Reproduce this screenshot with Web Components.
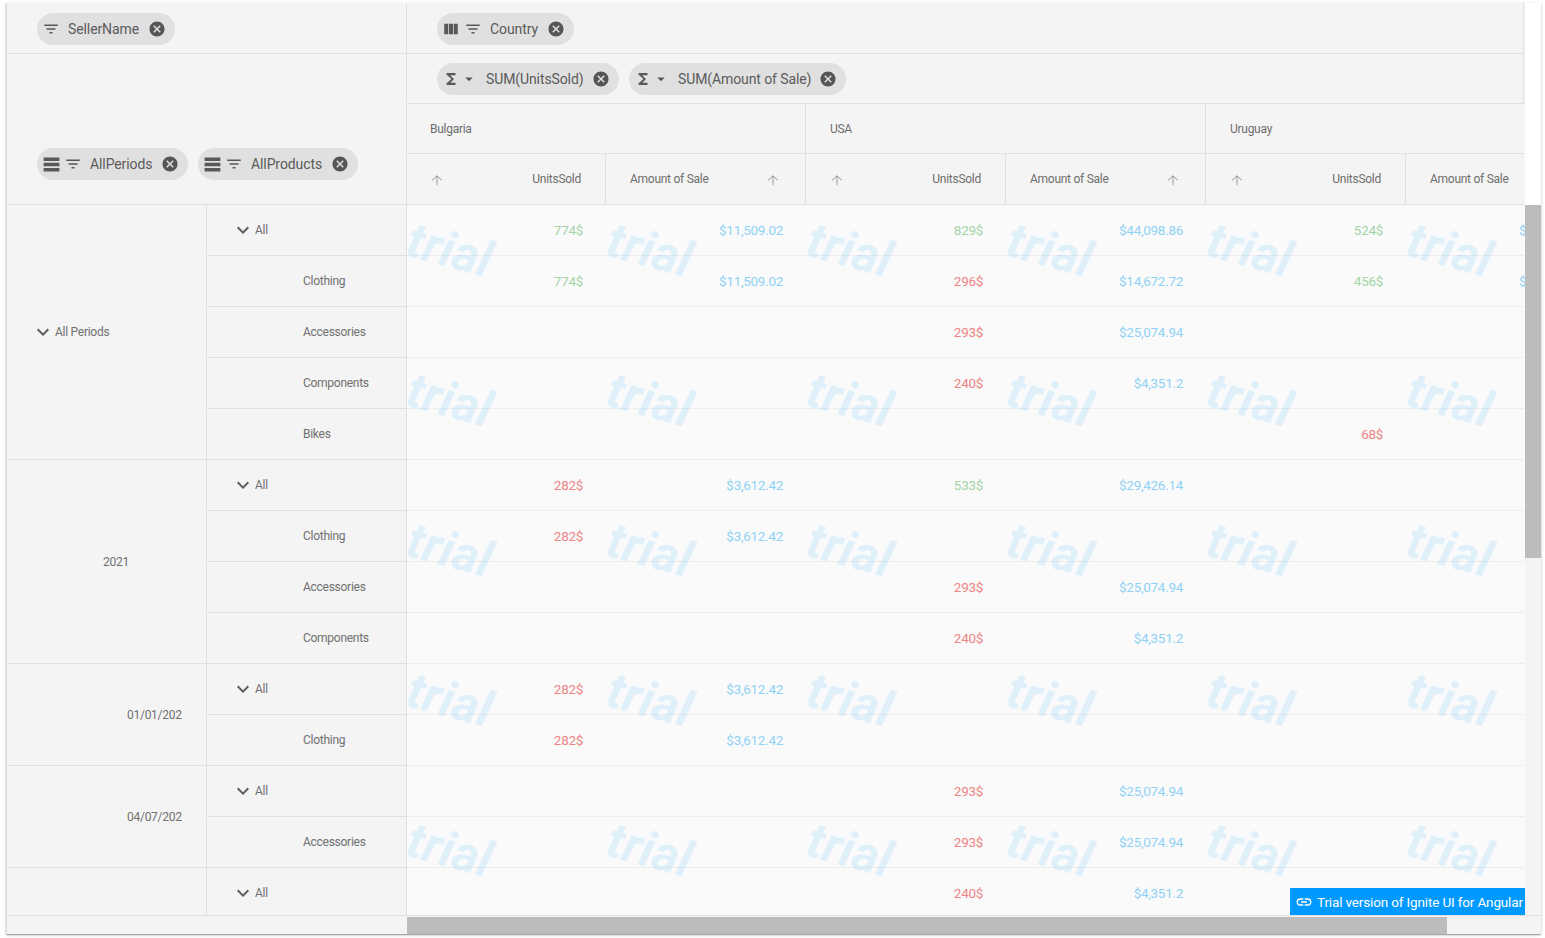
<!DOCTYPE html>
<html lang="en"><head><meta charset="utf-8"><title>Pivot grid</title>
<style>
html,body{margin:0;padding:0;background:#fff}
body{font-family:Roboto,"Liberation Sans",sans-serif;width:1545px;height:938px;overflow:hidden;padding:3px 0 0 6px;box-sizing:border-box}
</style></head><body>
<pivot-grid></pivot-grid>
<script>
const PATHS={
filter_list:'M10 18h4v-2h-4v2zM3 6v2h18V6H3zm3 7h12v-2H6v2z',
table_rows:'M21 8H3V4h18v4zm0 2H3v4h18v-4zm0 6H3v4h18v-4z',
view_column:'M14.67 5v14H9.33V5h5.34zm1 14H21V5h-5.33v14zm-7.34 0V5H3v14h5.33z',
functions:'M18 4H6v2l6.5 6L6 18v2h12v-3h-7l5-5-5-5h7z',
arrow_drop_down:'M7 10l5 5 5-5z',
cancel:'M12 2C6.47 2 2 6.47 2 12s4.47 10 10 10 10-4.47 10-10S17.53 2 12 2zm5 13.59L15.59 17 12 13.41 8.41 17 7 15.59 10.59 12 7 8.41 8.41 7 12 10.59 15.59 7 17 8.41 13.41 12 17 15.59z',
arrow_upward:'M4.7 12l.8.8L11.4 6.9V20h1.2V6.9l5.9 5.9.8-.8L12 4.7z',
expand_more:'M16.59 8.59L12 13.17 7.41 8.59 6 10l6 6 6-6z',
link:'M3.9 12c0-1.71 1.39-3.1 3.1-3.1h4V7H7c-2.76 0-5 2.24-5 5s2.24 5 5 5h4v-1.9H7c-1.71 0-3.1-1.39-3.1-3.1zM8 13h8v-2H8v2zm9-6h-4v1.9h4c1.71 0 3.1 1.39 3.1 3.1s-1.39 3.1-3.1 3.1h-4V17h4c2.76 0 5-2.24 5-5s-2.24-5-5-5z'
};
class GridIcon extends HTMLElement{
  connectedCallback(){
    if(this.shadowRoot)return;
    const s=this.getAttribute('size')||18,b=this.getAttribute('box')||s,m=(b-s)/2;
    this.attachShadow({mode:'open'}).innerHTML=`<style>:host{display:block;flex:none;width:${b}px;height:${b}px}svg{display:block;width:${s}px;height:${s}px;margin:${m}px;fill:currentColor}</style><svg viewBox="0 0 24 24" aria-hidden="true"><path d="${PATHS[this.getAttribute('name')]}"/></svg>`;
  }
}
customElements.define('grid-icon',GridIcon);

class PivotChip extends HTMLElement{
  connectedCallback(){
    if(this.shadowRoot)return;
    const icons=(this.getAttribute('icons')||'').split(',');
    const w=this.getAttribute('w'),pad=this.getAttribute('pad')||5,gap=this.getAttribute('gap')||4;
    const ic=icons.map(n=>n==='table_rows'?`<grid-icon name="${n}" size="21" box="18"></grid-icon>`:`<grid-icon name="${n}"></grid-icon>`).join('');
    this.attachShadow({mode:'open'}).innerHTML=`<style>
      :host{display:inline-flex;align-items:center;height:32px;border-radius:16px;background:#e0e0e0;color:#5b5b5b;padding:0 9px 0 ${pad}px;box-sizing:border-box;flex:none}
      .ic{display:flex;gap:${gap}px;color:#585858}
      .t{width:${w}px;margin:0 8px;white-space:nowrap;font-size:14px;letter-spacing:-.1px;line-height:18px}
      grid-icon.x{color:#555}
    </style><div class="ic">${ic}</div><span class="t"><slot></slot></span><grid-icon class="x" name="cancel"></grid-icon>`;
  }
}
customElements.define('pivot-chip',PivotChip);

class ColHeader extends HTMLElement{
  connectedCallback(){
    if(this.shadowRoot)return;
    const side=this.getAttribute('arrow');
    const arrow=side?`<grid-icon name="arrow_upward" size="16"></grid-icon>`:'';
    this.attachShadow({mode:'open'}).innerHTML=`<style>
      :host{display:flex;align-items:center;justify-content:space-between;box-sizing:border-box;width:200px;flex:none;height:100%;padding:0 24px;border-left:1px solid #e0e0e0;font-size:12px;letter-spacing:-.27px;color:#6e6e6e;background:#f4f4f4}
      :host([arrow=right]){flex-direction:row-reverse}
      :host([arrow=left]) grid-icon{margin-left:-1px}
      grid-icon{color:#8a8a8a;margin-top:2px}
    </style>${arrow}<span><slot></slot></span>`;
  }
}
customElements.define('col-header',ColHeader);

class RowGroup extends HTMLElement{
  connectedCallback(){
    if(this.shadowRoot)return;
    const rows=+this.getAttribute('rows'),exp=this.hasAttribute('expanded'),off=this.getAttribute('off');
    const labels=JSON.parse(this.getAttribute('labels'));
    const lab=exp?`<grid-icon name="expand_more" size="24"></grid-icon><span>${this.getAttribute('label')}</span>`
      :`<span class="d" style="margin-left:${off}px">${this.getAttribute('label')}</span>`;
    const rr=labels.map(l=>l==='All'
      ?`<div class="r"><grid-icon name="expand_more" size="24"></grid-icon><span>All</span></div>`
      :`<div class="r leaf"><span>${l}</span></div>`).join('');
    this.attachShadow({mode:'open'}).innerHTML=`<style>
      :host{display:flex;flex:none;height:${rows*51}px;box-sizing:border-box;font-size:12px;letter-spacing:-.27px;color:#707070;background:#f4f4f4}
      .c{box-sizing:border-box;width:200px;flex:none;border-bottom:1px solid #e0e0e0;border-right:1px solid #e0e0e0;display:flex;align-items:center;padding:${this.getAttribute('pt')||0}px 24px 0}
      .c grid-icon,.r grid-icon{color:#5e5e5e}
      .d{overflow:hidden;white-space:nowrap;flex:1}
      .rs{width:200px;flex:none}
      .r{box-sizing:border-box;height:51px;border-bottom:1px solid #e0e0e0;border-right:1px solid #e0e0e0;display:flex;align-items:center;padding-left:24px}
      .r.leaf{padding-left:96px}
    </style><div class="c">${lab}</div><div class="rs">${rr}</div>`;
  }
}
customElements.define('row-group',RowGroup);

class DataRow extends HTMLElement{
  connectedCallback(){
    if(this.shadowRoot)return;
    const v=JSON.parse(this.getAttribute('v'));
    const cell=(t,i)=>{
      if(!t)return '<div class="k"></div>';
      let c='b';
      if(i%2==0)c=parseInt(t)>=450?'g':'e';
      return `<div class="k ${c}">${t}</div>`;
    };
    this.attachShadow({mode:'open'}).innerHTML=`<style>
      :host{display:grid;grid-template-columns:repeat(6,200px);height:51px;box-sizing:border-box;border-bottom:1px solid #eeeeee;background:#fafafa;font-size:13.5px;letter-spacing:-.3px}
      .k{display:flex;align-items:center;justify-content:flex-end;padding-right:24px;white-space:nowrap}
      .g{color:#a4d4a6}.e{color:#ec8585}.b{color:#8fd2f5}
    </style>${v.map(cell).join('')}`;
  }
}
customElements.define('data-row',DataRow);

class TrialMark extends HTMLElement{
  connectedCallback(){
    if(this.shadowRoot)return;
    let t='';for(let i=0;i<36;i++)t+='<div class="t"><span>trial</span></div>';
    this.attachShadow({mode:'open'}).innerHTML=`<style>
      :host{position:absolute;inset:0;display:grid;grid-template-columns:repeat(6,200px);grid-auto-rows:150px;pointer-events:none;overflow:hidden}
      .t{height:150px;padding:15px 0 0 0;box-sizing:border-box}
      span{display:inline-block;font:italic 700 50px/60px Roboto,sans-serif;color:rgba(0,153,255,.1);transform:rotate(15deg)}
    </style>${t}`;
  }
}
customElements.define('trial-mark',TrialMark);

class TrialNote extends HTMLElement{
  connectedCallback(){
    if(this.shadowRoot)return;
    this.attachShadow({mode:'open'}).innerHTML=`<style>
      :host{position:absolute;right:0;bottom:0;width:235px;height:27px;background:#0099ff;color:#fff;display:flex;align-items:center;font-size:13.5px;letter-spacing:-.15px;padding-left:5px;box-sizing:border-box;white-space:nowrap;gap:4px}
    </style><grid-icon name="link"></grid-icon><span><slot></slot></span>`;
  }
}
customElements.define('trial-note',TrialNote);

const ROWS=[
['774$','$11,509.02','829$','$44,098.86','524$','$42,161.44'],
['774$','$11,509.02','296$','$14,672.72','456$','$35,806.18'],
['','','293$','$25,074.94','',''],
['','','240$','$4,351.2','',''],
['','','','','68$',''],
['282$','$3,612.42','533$','$29,426.14','',''],
['282$','$3,612.42','','','',''],
['','','293$','$25,074.94','',''],
['','','240$','$4,351.2','',''],
['282$','$3,612.42','','','',''],
['282$','$3,612.42','','','',''],
['','','293$','$25,074.94','',''],
['','','293$','$25,074.94','',''],
['','','240$','$4,351.2','','']
];
const GROUPS=[
{label:'All Periods',rows:5,exp:1,labels:['All','Clothing','Accessories','Components','Bikes']},
{label:'2021',rows:4,off:72,labels:['All','Clothing','Accessories','Components']},
{label:'01/01/2021',rows:2,off:96,labels:['All','Clothing']},
{label:'04/07/2021',rows:2,off:96,labels:['All','Accessories']},
{label:'07/10/2021',rows:2,off:96,pt:2,labels:['All']}
];
class PivotGrid extends HTMLElement{
  connectedCallback(){
    if(this.shadowRoot)return;
    const countries=['Bulgaria','USA','Uruguay'];
    const top=countries.map(c=>`<div class="ct">${c}</div>`).join('');
    const sub=countries.map((c,i)=>`<col-header arrow="left">UnitsSold</col-header><col-header ${i<2?'arrow="right"':''}>Amount of Sale</col-header>`).join('');
    const grp=GROUPS.map(g=>`<row-group rows="${g.rows}" ${g.exp?'expanded':''} off="${g.off||0}" pt="${g.pt||0}" label="${g.label}" labels='${JSON.stringify(g.labels)}'></row-group>`).join('');
    const rows=ROWS.map(r=>`<data-row v='${JSON.stringify(r)}'></data-row>`).join('');
    this.attachShadow({mode:'open'}).innerHTML=`<style>
      :host{display:grid;grid-template-columns:400px 1118px 16px;grid-template-rows:202px 710px 19px;width:1535px;height:931px;box-sizing:border-box;border-left:1px solid #dcdcdc;font-family:Roboto,"Liberation Sans",sans-serif;background:#f4f4f4;box-shadow:0 1px 3px rgba(0,0,0,.2),0 1px 1px rgba(0,0,0,.14),0 2px 1px -1px rgba(0,0,0,.12)}
      .hl{display:flex;flex-direction:column;box-sizing:border-box;border-right:1px solid #e0e0e0;border-bottom:1px solid #e0e0e0}
      .hl .a{height:51px;box-sizing:border-box;flex:none;padding:10px 0 0 30px;border-bottom:1px solid #e0e0e0}
      .hl .b{flex:1;display:flex;align-items:flex-end;gap:10px;padding:0 0 24px 30px}
      .hr{display:flex;flex-direction:column;min-width:0;overflow:hidden}
      .hr .a{box-sizing:border-box;flex:none;width:1117px;padding:10px 0 0 30px;display:flex;gap:10px;border-right:1px solid #e0e0e0;border-bottom:1px solid #e0e0e0}
      .hr .a.one{height:51px}.hr .a.two{height:50px;padding-top:9px}
      .cts{display:flex;height:50px;flex:none;margin-left:-2px;box-sizing:border-box;border-bottom:1px solid #e0e0e0;width:1119px}
      .ct{box-sizing:border-box;width:400px;flex:none;border-left:1px solid #e0e0e0;padding-left:24px;display:flex;align-items:center;font-size:12px;letter-spacing:-.27px;color:#6e6e6e}
      .ct:last-child{width:319px}
      .subs{display:flex;height:51px;flex:none;margin-left:-2px;box-sizing:border-box;border-bottom:1px solid #e0e0e0;width:1119px;overflow:hidden}
      .corner{background:#fff}
      .rh{overflow:hidden;display:flex;flex-direction:column;min-height:0}
      .body{position:relative;overflow:hidden;min-height:0;min-width:0}
      .vt{background:#f4f4f4}
      .vth{height:353px;background:#bcbcbc}
      .bl{border-top:1px solid #e0e0e0;background:#f4f4f4}
      .bt{box-sizing:border-box;padding-top:1px}
      .hth{height:17px;width:1040px;background:#bcbcbc}
    </style>
    <div class="hl">
      <div class="a"><pivot-chip icons="filter_list" w="72">SellerName</pivot-chip></div>
      <div class="b"><pivot-chip icons="table_rows,filter_list" w="63">AllPeriods</pivot-chip><pivot-chip icons="table_rows,filter_list" w="72">AllProducts</pivot-chip></div>
    </div>
    <div class="hr">
      <div class="a one"><pivot-chip icons="view_column,filter_list" w="49">Country</pivot-chip></div>
      <div class="a two"><pivot-chip icons="functions,arrow_drop_down" gap="0" w="98">SUM(UnitsSold)</pivot-chip><pivot-chip icons="functions,arrow_drop_down" gap="0" w="133">SUM(Amount of Sale)</pivot-chip></div>
      <div class="cts">${top}</div>
      <div class="subs">${sub}</div>
    </div>
    <div class="corner"></div>
    <div class="rh">${grp}</div>
    <div class="body"><div>${rows}</div><trial-mark></trial-mark><trial-note>Trial version of Ignite UI for Angular</trial-note></div>
    <div class="vt"><div class="vth"></div></div>
    <div class="bl"></div>
    <div class="bl bt"><div class="hth"></div></div>
    <div class="bl"></div>`;
  }
}
customElements.define('pivot-grid',PivotGrid);
</script>
</body></html>
